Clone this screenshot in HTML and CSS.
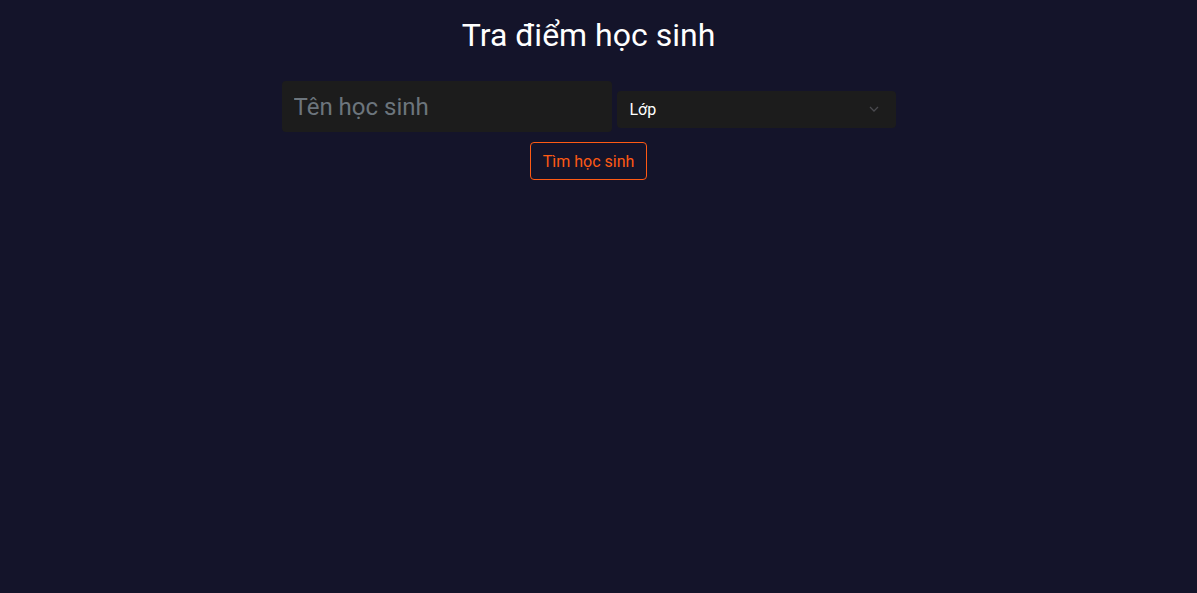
FILE: index.html
```html
<!DOCTYPE html>
<html lang="vi">
<head>
<meta charset="utf-8">
<title>Tra điểm học sinh</title>
<link rel="stylesheet" href="styles.css">
</head>
<body>
<main class="page">
  <h1 class="title">Tra điểm học sinh</h1>
  <div class="search-row">
    <input class="name-input" type="text" placeholder="Tên học sinh">
    <div class="class-select">
      <span class="class-label">Lớp</span>
      <svg class="chevron" width="10" height="6" viewBox="0 0 10 6" aria-hidden="true">
        <path d="M1 1 L5 5 L9 1" fill="none" stroke="#4a4a4f" stroke-width="1.3"/>
      </svg>
    </div>
  </div>
  <button class="search-btn" type="button">Tìm học sinh</button>
</main>
</body>
</html>
```
FILE: styles.css
```css
html, body {
  margin: 0;
  padding: 0;
  background: #14142a;
  height: 100%;
}
body {
  font-family: Roboto, "Liberation Sans", Arial, sans-serif;
  color: #ffffff;
}
.page {
  display: flex;
  flex-direction: column;
  align-items: center;
  padding: 16px 20px 0 0;
}
.title {
  margin: 0 0 27px;
  font-size: 32px;
  font-weight: 400;
  line-height: 38px;
  color: #ffffff;
}
.search-row {
  display: flex;
  align-items: baseline;
  gap: 5px;
}
.name-input {
  box-sizing: border-box;
  width: 330px;
  height: 51px;
  padding: 0 12px;
  border: none;
  border-radius: 4px;
  background: #1c1c1c;
  font-family: inherit;
  font-size: 24px;
  color: #dddddd;
  outline: none;
}
.name-input::placeholder {
  color: #6c757d;
}
.class-select {
  box-sizing: border-box;
  width: 279px;
  height: 37px;
  padding: 0 17px 0 13px;
  border-radius: 4px;
  background: #1c1c1c;
  display: flex;
  align-items: center;
  justify-content: space-between;
  font-size: 16px;
  color: #ffffff;
}
.chevron {
  display: block;
}
.search-btn {
  box-sizing: border-box;
  margin-top: 10px;
  width: 117px;
  height: 38px;
  padding: 0;
  border: 1px solid #ff5a14;
  border-radius: 4px;
  background: transparent;
  font-family: inherit;
  font-size: 16px;
  color: #ff5a14;
  cursor: pointer;
}
```
